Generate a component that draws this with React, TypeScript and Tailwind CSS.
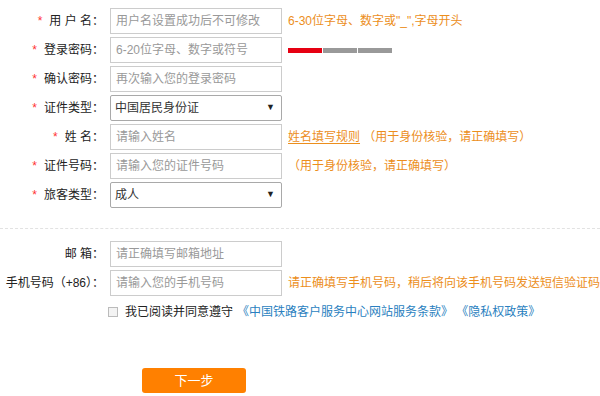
type Field = {
    label: string,
    required?: boolean,
    placeholder?: string,
    select?: string,
    hint?: React.ReactNode,
}

const hintCls = "ml-[6px] whitespace-nowrap text-[12px] text-[#ec8e1c]"

const mainFields: Field[] = [
    { label: "用 户 名：", required: true, placeholder: "用户名设置成功后不可修改", hint: <span className={hintCls}>6-30位字母、数字或"_",字母开头</span> },
    {
        label: "登录密码：", required: true, placeholder: "6-20位字母、数字或符号",
        hint: (
            <div className="ml-[6px] flex gap-[1px]">
                <span className="h-[5px] w-[34px] bg-[#e60012]" />
                <span className="h-[5px] w-[34px] bg-[#999]" />
                <span className="h-[5px] w-[34px] bg-[#999]" />
            </div>
        ),
    },
    { label: "确认密码：", required: true, placeholder: "再次输入您的登录密码" },
    { label: "证件类型：", required: true, select: "中国居民身份证" },
    {
        label: "姓 名：", required: true, placeholder: "请输入姓名",
        hint: (
            <span className={hintCls}>
                <span className="underline underline-offset-2">姓名填写规则</span> （用于身份核验，请正确填写）
            </span>
        ),
    },
    { label: "证件号码：", required: true, placeholder: "请输入您的证件号码", hint: <span className={hintCls}>（用于身份核验，请正确填写）</span> },
    { label: "旅客类型：", required: true, select: "成人" },
]

const extraFields: Field[] = [
    { label: "邮 箱：", placeholder: "请正确填写邮箱地址" },
    { label: "手机号码（+86）：", placeholder: "请输入您的手机号码", hint: <span className={hintCls}>请正确填写手机号码，稍后将向该手机号码发送短信验证码</span> },
]

function Row({ field }: { field: Field }) {
    return (
        <div className="flex h-[26px] items-center">
            <label className="w-[104px] shrink-0 whitespace-nowrap text-right text-[12px] text-[#222]">
                {field.required && <span className="mr-[7px] text-[#f33]">*</span>}
                {field.label}
            </label>
            {field.select ? (
                <div className="ml-[6px] flex h-[26px] w-[172px] shrink-0 items-center justify-between rounded-[2px] border border-[#a9a9a9] px-[4px] text-[12px] text-[#333]">
                    <span>{field.select}</span>
                    <span className="mr-[2px] text-[9px] text-[#222]">▼</span>
                </div>
            ) : (
                <input
                    type="text"
                    placeholder={field.placeholder}
                    className="ml-[6px] h-[26px] w-[172px] shrink-0 border border-[#ccc] px-[5px] text-[12px] text-[#333] outline-none placeholder:text-[#999]"
                />
            )}
            {field.hint}
        </div>
    )
}

function App() {
    return (
        <div className="h-[396px] w-[600px] overflow-hidden bg-white font-['Liberation_Sans','Noto_Sans_CJK_SC',sans-serif]">
            <div className="flex flex-col gap-[3px] border-b border-dashed border-[#e2e2e2] pb-[20px] pt-[8px]">
                {mainFields.map((f) => (
                    <Row key={f.label} field={f} />
                ))}
            </div>

            <div className="flex flex-col gap-[3px] pt-[12px]">
                {extraFields.map((f) => (
                    <Row key={f.label} field={f} />
                ))}
            </div>

            <div className="mt-[6px] flex h-[20px] items-center whitespace-nowrap pl-[108px] text-[12px]">
                <span className="h-[10px] w-[10px] border border-[#bbb] bg-[#f3f3f3]" />
                <span className="ml-[7px] text-[#222]">我已阅读并同意遵守</span>
                <span className="ml-[4px] text-[#2a7fc0]">《中国铁路客户服务中心网站服务条款》 《隐私权政策》</span>
            </div>

            <button
                type="button"
                className="ml-[142px] mt-[46px] h-[25px] w-[104px] rounded-[3px] bg-[#ff8000] text-[13px] text-white"
            >
                下一步
            </button>
        </div>
    )
}

export default App
